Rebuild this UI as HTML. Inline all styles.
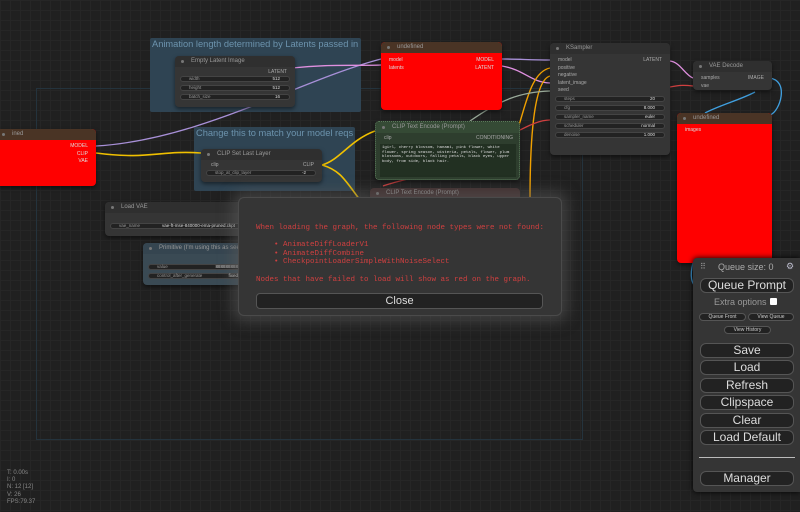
<!DOCTYPE html>
<html><head><meta charset="utf-8"><style>
*{margin:0;padding:0;box-sizing:border-box;white-space:nowrap}
body{width:800px;height:512px;overflow:hidden;background:#202020;font-family:"Liberation Sans",sans-serif;position:relative;
background-image:linear-gradient(#262626 1px,transparent 1px),linear-gradient(90deg,#262626 1px,transparent 1px);background-size:10px 10px}
.a{position:absolute}
.node{position:absolute;background:#353535;border-radius:4px;box-shadow:0 2px 4px rgba(0,0,0,.5);font-size:5px;color:#aaa;overflow:hidden}
.node .t{height:11px;line-height:11px;padding-left:16px;color:#999;font-size:6px;position:relative;background:#2f2f2f;border-radius:4px 4px 0 0}
.node .t:before{content:"";position:absolute;left:6px;top:4px;width:3px;height:3px;border-radius:50%;background:#777}
.w{position:absolute;height:6px;background:#222;border:1px solid #444;border-radius:3px;font-size:4.5px;color:#999;line-height:4px;padding:0 8px}
.w b{position:absolute;right:9px;color:#ddd;font-weight:normal}
.red{background:#f00}
.grp{position:absolute;border-radius:2px;overflow:hidden}
.grp div{color:#6c93ad;font-size:9.3px;padding:1px 2px}
.btn{position:absolute;left:700px;width:94px;height:15px;background:#222;border:1px solid #555;border-radius:6px;color:#ddd;font-size:12px;text-align:center;line-height:13px}
.sb{position:absolute;height:8px;background:#222;border:1px solid #555;border-radius:5px;color:#ccc;font-size:5px;text-align:center;line-height:6px}
</style></head><body>
<div class="a" style="left:36px;top:88px;width:547px;height:352px;border:1px solid #24333d"></div>

<div class="grp" style="left:150px;top:38px;width:211px;height:74px;background:#2f4453"><div>Animation length determined by Latents passed in</div></div>
<div class="grp" style="left:194px;top:127px;width:161px;height:64px;background:#2f4453"><div>Change this to match your model reqs</div></div>

<svg class="a" style="left:0;top:0" width="800" height="512" fill="none" stroke-width="1.3">
<path d="M96 146 C200 140,300 80,381 59" stroke="#a890d8"/>
<path d="M292 68 C330 64,350 66,381 65" stroke="#e090e0"/>
<path d="M96 153 C150 160,160 150,201 153" stroke="#f0c000" stroke-width="1.6"/>
<path d="M322 165 C340 160,350 140,375 131" stroke="#f0c000" stroke-width="1.6"/>
<path d="M322 165 C340 170,345 180,360 200" stroke="#f0c000" stroke-width="1.6"/>
<path d="M502 59 C520 59,530 60,550 60" stroke="#a890d8"/>
<path d="M502 66 C525 70,530 82,550 83" stroke="#e090e0"/>
<path d="M516 134 C525 110,530 72,550 68 M530 200 C530 130,535 80,550 76" stroke="#f0a000" stroke-width="1.4"/>
<path d="M470 121 C500 100,520 92,550 91" stroke="#9a9"/>
<path d="M520 130 C530 125,540 120,550 120 M383 186 C400 180,430 175,450 165 M670 87 C680 85,685 85,693 86" stroke="#d04040"/>
<path d="M670 61 C680 62,685 75,693 78" stroke="#e090e0"/>
<path d="M769 78 C790 80,780 112,770 115 M705 113 C720 105,740 100,755 92" stroke="#40a0e0"/>
<path d="M693 262 C690 275,690 285,700 290" stroke="#40a0e0"/>
</svg>

<div class="node" style="left:175px;top:56px;width:120px;height:51px"><div class="t">Empty Latent Image</div>
<div class="a" style="right:8px;top:13px;color:#aaa">LATENT</div>
<div class="w" style="left:5px;top:20px;width:110px">width<b>512</b></div>
<div class="w" style="left:5px;top:29px;width:110px">height<b>512</b></div>
<div class="w" style="left:5px;top:38px;width:110px">batch_size<b>16</b></div></div>

<div class="node red" style="left:-4px;top:129px;width:100px;height:57px"><div class="t" style="background:#4a3425">ined</div>
<div class="a" style="right:8px;top:14px;color:#ddd;text-align:right;line-height:7.5px">MODEL<br>CLIP<br>VAE</div></div>

<div class="node" style="left:201px;top:149px;width:121px;height:33px"><div class="t">CLIP Set Last Layer</div>
<div class="a" style="left:10px;top:13px">clip</div><div class="a" style="right:8px;top:13px">CLIP</div>
<div class="w" style="left:5px;top:21px;width:110px">stop_at_clip_layer<b>-2</b></div></div>

<div class="node red" style="left:381px;top:42px;width:121px;height:68px"><div class="t" style="background:#4a3425">undefined</div>
<div class="a" style="left:8px;top:14px;color:#ddd;line-height:8px">model<br>latents</div><div class="a" style="right:8px;top:14px;color:#ddd;line-height:8px;text-align:right">MODEL<br>LATENT</div></div>

<div class="node" style="left:550px;top:43px;width:120px;height:112px"><div class="t">KSampler</div>
<div class="a" style="left:8px;top:14px;line-height:7.6px">model<br>positive<br>negative<br>latent_image<br>seed</div><div class="a" style="right:8px;top:14px">LATENT</div>
<div class="w" style="left:5px;top:53px;width:110px">steps<b>20</b></div>
<div class="w" style="left:5px;top:62px;width:110px">cfg<b>8.000</b></div>
<div class="w" style="left:5px;top:71px;width:110px">sampler_name<b>euler</b></div>
<div class="w" style="left:5px;top:80px;width:110px">scheduler<b>normal</b></div>
<div class="w" style="left:5px;top:89px;width:110px">denoise<b>1.000</b></div></div>

<div class="node" style="left:693px;top:61px;width:79px;height:29px"><div class="t">VAE Decode</div>
<div class="a" style="left:8px;top:14px;line-height:7.5px">samples<br>vae</div><div class="a" style="right:8px;top:14px">IMAGE</div></div>

<div class="node red" style="left:677px;top:113px;width:95px;height:150px"><div class="t" style="background:#4a3425">undefined</div>
<div class="a" style="left:8px;top:14px;color:#ddd">images</div></div>

<div class="node" style="left:375px;top:121px;width:145px;height:59px;background:#2e3e2e;border:1px dotted #5a7a5a"><div class="t" style="background:#354a35">CLIP Text Encode (Prompt)</div>
<div class="a" style="left:8px;top:13px">clip</div><div class="a" style="right:6px;top:13px">CONDITIONING</div>
<div class="a" style="left:4px;top:22px;width:136px;height:33px;background:#223022;color:#ddd;font-size:4px;padding:2px;line-height:4.5px;font-family:'Liberation Mono',monospace;white-space:normal">1girl, cherry blossom, hanami, pink flower, white flower, spring season, wisteria, petals, flower, plum blossoms, outdoors, falling petals, black eyes, upper body, from side, black hair.</div></div>

<div class="node" style="left:370px;top:188px;width:150px;height:40px;background:#3a2c2c"><div class="t" style="background:#402e2e">CLIP Text Encode (Prompt)</div></div>

<div class="node" style="left:105px;top:202px;width:140px;height:34px"><div class="t">Load VAE</div>
<div class="w" style="left:5px;top:21px;width:135px">vae_name<b>vae-ft-mse-840000-ema-pruned.ckpt</b></div></div>

<div class="node" style="left:143px;top:243px;width:102px;height:42px;background:#3a4a54"><div class="t" style="background:#354550">Primitive (I'm using this as seed)</div>
<div class="w" style="left:5px;top:21px;width:100px">value<b>888888888</b></div>
<div class="w" style="left:5px;top:30px;width:100px">control_after_generate<b>fixed</b></div></div>

<div class="a" style="left:238px;top:197px;width:324px;height:119px;background:#353535;border:1px solid #4a4a4a;border-radius:6px;box-shadow:0 0 14px 6px rgba(90,90,90,.55)">
<div style="font-family:'Liberation Mono',monospace;color:#d04040;font-size:7.5px;padding:26px 0 0 17px;line-height:8.6px;white-space:pre">When loading the graph, the following node types were not found:

    • AnimateDiffLoaderV1
    • AnimateDiffCombine
    • CheckpointLoaderSimpleWithNoiseSelect

Nodes that have failed to load will show as red on the graph.</div>
<div class="a" style="left:17px;top:95px;width:287px;height:16px;background:#222;border:1px solid #555;border-radius:4px;color:#ddd;font-size:11px;text-align:center;line-height:14px">Close</div></div>

<div class="a" style="left:693px;top:258px;width:107px;height:234px;background:#353535;border-radius:4px 0 0 4px;box-shadow:0 0 6px #000"></div>
<div class="a" style="left:700px;top:262px;color:#999;font-size:8px">⠿</div>
<div class="a" style="left:718px;top:262px;color:#aaa;font-size:9px">Queue size: 0</div>
<div class="a" style="left:786px;top:261px;color:#bbc;font-size:9px">⚙</div>
<div class="btn" style="top:278px;height:15px">Queue Prompt</div>
<div class="a" style="left:714px;top:297px;color:#999;font-size:9px">Extra options</div>
<div class="a" style="left:770px;top:298px;width:7px;height:7px;background:#fff;border-radius:1px"></div>
<div class="sb" style="left:699px;top:313px;width:47px">Queue Front</div>
<div class="sb" style="left:748px;top:313px;width:46px">View Queue</div>
<div class="sb" style="left:724px;top:326px;width:47px">View History</div>
<div class="btn" style="top:343px">Save</div>
<div class="btn" style="top:360px">Load</div>
<div class="btn" style="top:378px">Refresh</div>
<div class="btn" style="top:395px">Clipspace</div>
<div class="btn" style="top:413px">Clear</div>
<div class="btn" style="top:430px">Load Default</div>
<div class="a" style="left:699px;top:457px;width:96px;height:1px;background:#bbb"></div>
<div class="btn" style="top:471px">Manager</div>

<div class="a" style="left:7px;top:470px;color:#888;font-size:6px;line-height:7.2px">T: 0.00s<br>I: 0<br>N: 12 [12]<br>V: 26<br>FPS:79.37</div>
</body></html>
